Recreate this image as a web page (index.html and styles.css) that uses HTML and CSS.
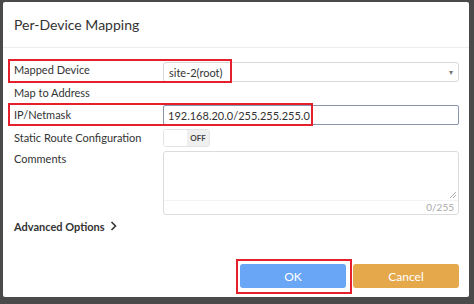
FILE: index.html
```html
<!DOCTYPE html>
<html>
<head>
<meta charset="utf-8">
<link rel="stylesheet" href="styles.css">
</head>
<body>
<div class="dialog">
  <div class="header">Per-Device Mapping</div>
  <div class="content">
    <div class="row row-control">
      <div class="label">Mapped Device</div>
      <div class="select"><span>site-2(root)</span><span class="caret">&#9662;</span></div>
    </div>
    <div class="row row-text">
      <div class="label">Map to Address</div>
    </div>
    <div class="row row-control row-ip">
      <div class="label">IP/Netmask</div>
      <div class="input">192.168.20.0/255.255.255.0<span class="cursor"></span></div>
    </div>
    <div class="row row-toggle">
      <div class="label">Static Route Configuration</div>
      <div class="toggle"><span class="knob"></span><span class="off">OFF</span></div>
    </div>
    <div class="row row-comments">
      <div class="label">Comments</div>
      <div class="textarea">
        <div class="ta-area"><svg class="grip" width="8" height="8" viewBox="0 0 8 8"><path d="M7 1 L1 7 M7 4 L4 7" stroke="#9a9a9a" stroke-width="0.8" fill="none"/></svg></div>
        <div class="counter">0/255</div>
      </div>
    </div>
    <div class="advanced">Advanced Options <svg class="chev" width="7" height="10" viewBox="0 0 7 10"><path d="M1.5 1 L5.5 5 L1.5 9" stroke="#333" stroke-width="1.6" fill="none"/></svg></div>
  </div>
  <div class="footer">
    <div class="btn btn-ok">OK</div>
    <div class="btn btn-cancel">Cancel</div>
  </div>
  <div class="mark mark-device"></div>
  <div class="mark mark-ip"></div>
  <div class="mark mark-ok"></div>
</div>
</body>
</html>
```

FILE: styles.css
```css
* { box-sizing: border-box; }
html, body { margin: 0; padding: 0; }
body {
  width: 474px;
  height: 304px;
  background: #4a4a4a;
  font-family: Lato, "Liberation Sans", sans-serif;
  color: #333;
  overflow: hidden;
  padding: 2px 5px 0 3px;
}
.dialog {
  position: relative;
  width: 466px;
  height: 295px;
  background: #fff;
  border-radius: 2px;
}
.header {
  height: 46px;
  padding: 14px 0 0 11px;
  font-size: 14px;
  color: #333;
  border-bottom: 1px solid #ececec;
}
.content {
  padding: 14px 10px 0 11px;
  font-size: 11px;
}
.row {
  display: grid;
  grid-template-columns: 149px 296px;
  align-items: start;
}
.label {
  line-height: 16px;
  color: #333;
}
.row-control { height: 20px; }
.row-control .label { padding-top: 0; }
.row-ip .label { padding-top: 2px; }
.row-text { height: 16px; margin-top: 3px; }
.row-ip { margin-top: 4px; }
.row-toggle { margin-top: 4px; height: 18px; }
.row-toggle .label { padding-top: 1px; }
.row-comments { margin-top: 4px; }
.row-comments .label { padding-top: 0; }
.select {
  height: 20px;
  border: 1px solid #d8d8d8;
  border-radius: 3px;
  display: flex;
  align-items: center;
  justify-content: space-between;
  padding: 0 5px 0 5px;
  font-size: 11px;
}
.caret { font-size: 8px; color: #777; }
.input {
  height: 20px;
  border: 1px solid #8796ad;
  border-radius: 2px;
  padding: 0 0 0 4px;
  display: flex;
  align-items: center;
  font-size: 11px;
  color: #333;
}
.cursor {
  display: inline-block;
  width: 1px;
  height: 13px;
  background: #333;
  margin-left: 1px;
}
.toggle {
  width: 47px;
  height: 18px;
  border: 1px solid #e4e4e4;
  border-radius: 3px;
  display: flex;
  overflow: hidden;
}
.knob { width: 23px; background: #fff; }
.off {
  flex: 1;
  background: #efefef;
  font-size: 8px;
  font-weight: 700;
  color: #444;
  display: flex;
  align-items: center;
  justify-content: center;
}
.textarea {
  height: 64px;
  border: 1px solid #dcdcdc;
  border-radius: 3px;
  display: flex;
  flex-direction: column;
}
.ta-area {
  flex: 1;
  border-bottom: 1px solid #f3f3f3;
  position: relative;
}
.grip { position: absolute; right: 1px; bottom: 1px; }
.counter {
  height: 13px;
  font-size: 10px;
  color: #a8a8a8;
  text-align: right;
  padding-right: 4px;
  line-height: 12px;
}
.advanced {
  margin-top: 3px;
  font-size: 11px;
  font-weight: 700;
  color: #333;
  display: flex;
  align-items: center;
  gap: 5px;
  height: 16px;
}
.footer {
  display: flex;
  justify-content: flex-end;
  gap: 7px;
  margin-top: 30px;
  padding-right: 10px;
}
.btn {
  width: 106px;
  height: 24px;
  border-radius: 3px;
  color: #fff;
  font-size: 12px;
  display: flex;
  align-items: center;
  justify-content: center;
}
.btn-ok { background: #6aa6f6; }
.btn-cancel { background: #e5a84b; }
.mark {
  position: absolute;
  border: 2px solid #e3202b;
}
.mark-device { left: 5px; top: 57px; width: 224px; height: 24px; }
.mark-ip { left: 5px; top: 101px; width: 305px; height: 23px; }
.mark-ok { left: 233px; top: 257px; width: 116px; height: 35px; }
```
